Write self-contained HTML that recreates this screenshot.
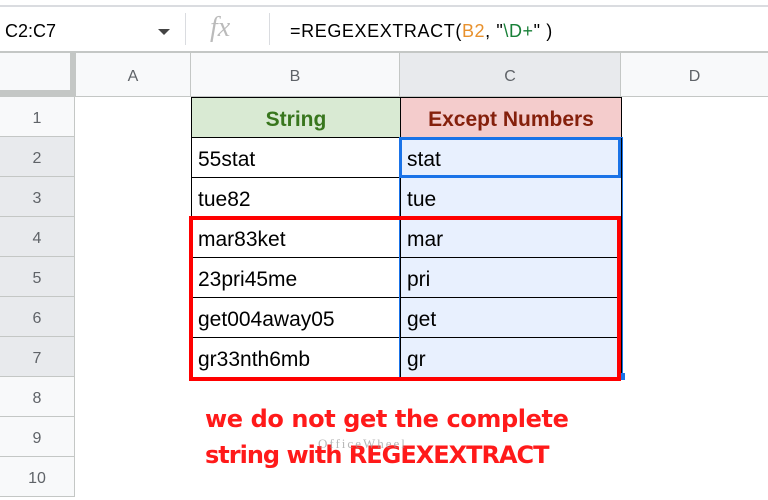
<!DOCTYPE html>
<html><head><style>
*{margin:0;padding:0;box-sizing:border-box}
body{width:768px;height:484px;overflow:hidden;background:#fff;font-family:"Liberation Sans",Arial,sans-serif;position:relative}
.a{position:absolute}
.rh{position:absolute;left:0;width:75px;height:40px;border-bottom:1px solid #c4c7c5;border-right:1px solid #c4c7c5;background:#f8f9fa;color:#5f6368;font-size:16px;text-align:center;line-height:43px}
.rh.s{background:#e8eaed}
.ch{position:absolute;top:53px;height:44px;border-right:1px solid #c4c7c5;border-bottom:1px solid #c4c7c5;background:#f8f9fa;color:#5f6368;font-size:16px;text-align:center;line-height:47px}
.c{position:absolute;height:41px;border:1px solid #000;font-size:21px;line-height:43px;padding-left:6px;color:#000}
</style></head><body>
<div class="a" style="left:0;top:5px;width:768px;height:2px;background:#dadce0"></div>
<div class="a" style="left:0;top:51px;width:768px;height:2px;background:#c4c7c5"></div>
<div class="a" style="left:5px;top:21px;font-size:18px;color:#000">C2:C7</div>
<div class="a" style="left:158px;top:29px;width:0;height:0;border-left:6px solid transparent;border-right:6px solid transparent;border-top:6px solid #444"></div>
<div class="a" style="left:185px;top:13px;width:1px;height:32px;background:#dadce0"></div>
<div class="a" style="left:210px;top:12px;font-family:'Liberation Serif',serif;font-style:italic;font-size:28px;color:#bbb">fx</div>
<div class="a" style="left:269px;top:13px;width:1px;height:32px;background:#dadce0"></div>
<div class="a" style="left:290px;top:21px;font-size:18px;color:#000;letter-spacing:0.6px">=REGEXEXTRACT(<span style="color:#e8912d">B2</span>, "<span style="color:#188038">\D+</span>" )</div>

<div class="a" style="left:0;top:53px;width:77px;height:44px;background:#f8f9fa;border-bottom:1px solid #c4c7c5"></div>
<div class="a" style="left:70px;top:53px;width:6px;height:44px;background:#c4c7c5"></div>
<div class="a" style="left:0;top:90px;width:76px;height:7px;background:#c4c7c5"></div>
<div class="ch" style="left:76px;width:115px">A</div>
<div class="ch" style="left:191px;width:209px">B</div>
<div class="ch" style="left:400px;width:221px;background:#e8eaed">C</div>
<div class="ch" style="left:621px;width:147px;border-right:none">D</div>

<div class="rh" style="top:97px">1</div>
<div class="rh s" style="top:137px">2</div>
<div class="rh s" style="top:177px">3</div>
<div class="rh s" style="top:217px">4</div>
<div class="rh s" style="top:257px">5</div>
<div class="rh s" style="top:297px">6</div>
<div class="rh s" style="top:337px">7</div>
<div class="rh" style="top:377px">8</div>
<div class="rh" style="top:417px">9</div>
<div class="rh" style="top:457px">10</div>

<div class="c" style="left:191px;top:97px;width:210px;background:#d9ead3;color:#38761d;font-weight:bold;text-align:center;padding:0">String</div>
<div class="c" style="left:400px;top:97px;width:222px;background:#f4cccc;color:#85200c;font-weight:bold;text-align:center;padding:0">Except Numbers</div>

<div class="c" style="left:191px;top:137px;width:210px">55stat</div>
<div class="c" style="left:191px;top:177px;width:210px">tue82</div>
<div class="c" style="left:191px;top:217px;width:210px">mar83ket</div>
<div class="c" style="left:191px;top:257px;width:210px">23pri45me</div>
<div class="c" style="left:191px;top:297px;width:210px">get004away05</div>
<div class="c" style="left:191px;top:337px;width:210px">gr33nth6mb</div>

<div class="c" style="left:400px;top:137px;width:222px;background:#e8f0fe">stat</div>
<div class="c" style="left:400px;top:177px;width:222px;background:#e8f0fe">tue</div>
<div class="c" style="left:400px;top:217px;width:222px;background:#e8f0fe">mar</div>
<div class="c" style="left:400px;top:257px;width:222px;background:#e8f0fe">pri</div>
<div class="c" style="left:400px;top:297px;width:222px;background:#e8f0fe">get</div>
<div class="c" style="left:400px;top:337px;width:222px;background:#e8f0fe">gr</div>

<div class="a" style="left:399px;top:137px;width:224px;height:242px;border:1px solid #1a73e8"></div>
<div class="a" style="left:399px;top:137px;width:222px;height:41px;border:3px solid #1a73e8"></div>
<div class="a" style="left:618px;top:373px;width:7px;height:7px;background:#1a73e8"></div>

<div class="a" style="left:189px;top:216px;width:432px;height:165px;border:4px solid #ff0000"></div>

<div class="a" style="left:205px;top:401px;font-size:24px;font-weight:bold;color:#ff1a1a;line-height:36px;font-family:'DejaVu Sans','Liberation Sans',sans-serif;letter-spacing:-0.4px">we do not get the complete<br><span style="letter-spacing:-1.0px">string with REGEXEXTRACT</span></div>
<div class="a" style="left:318px;top:436px;font-size:13px;color:#999;opacity:0.7;font-family:'Liberation Serif',serif;letter-spacing:2px">OfficeWheel</div>
</body></html>
